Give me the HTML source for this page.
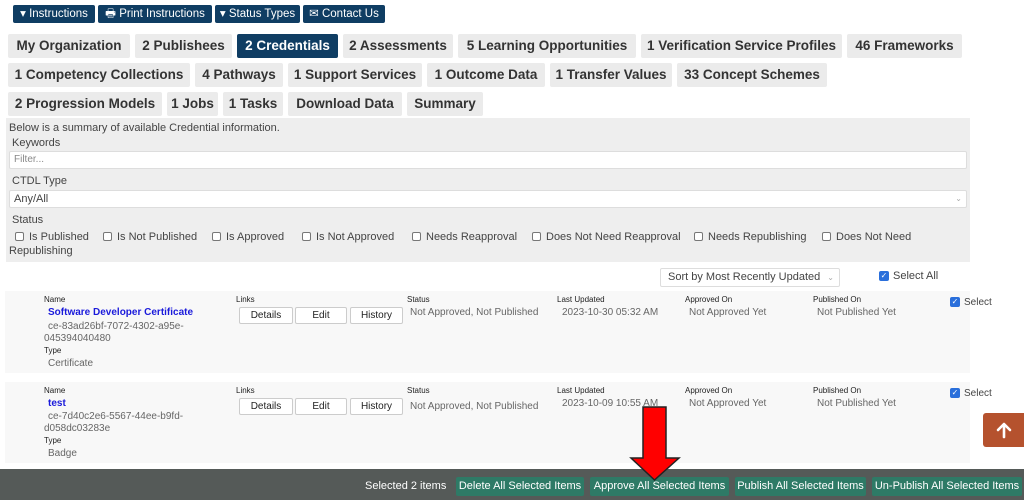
<!DOCTYPE html>
<html><head><meta charset="utf-8"><style>
*{box-sizing:border-box;margin:0;padding:0}
body{width:1024px;height:500px;overflow:hidden;background:#fff;font-family:"Liberation Sans",sans-serif;position:relative;color:#333}
.a{position:absolute;white-space:nowrap}
.tb{position:absolute;height:18px;background:#0f3d63;color:#fff;font-size:11.5px;line-height:18px;border-radius:2px;text-align:center}
.tab{position:absolute;height:24px;background:#ebebeb;color:#333;font-weight:bold;font-size:13.5px;line-height:24px;text-align:center;border-radius:2px}
.tab.on{background:#0f3d63;color:#fff}
.sm{font-size:11px;color:#444}
.lab{font-size:8px;color:#222}
.val{font-size:10px;color:#666}
.btn{position:absolute;height:17px;border:1px solid #ccc;background:#fff;border-radius:2px;font-size:10px;line-height:15px;text-align:center;color:#222}
.cb{display:inline-block;width:9px;height:9px;border:1px solid #777;border-radius:2px;vertical-align:-1px;margin-right:5px;background:#fff}
.cbc{position:absolute;width:10px;height:10px;background:#2a6fdb;border-radius:2px;color:#fff;font-size:8px;line-height:10px;text-align:center}
.gb{position:absolute;top:477px;height:19px;background:#2e7a66;color:#fff;font-size:11px;line-height:19px;text-align:center;border-radius:2px}
</style></head><body>
<div class="tb" style="left:13px;top:5px;width:82px">▾ Instructions</div>
<div class="tb" style="left:98px;top:5px;width:114px">🖶 Print Instructions</div>
<div class="tb" style="left:215px;top:5px;width:85px">▾ Status Types</div>
<div class="tb" style="left:303px;top:5px;width:82px">✉ Contact Us</div>

<div class="tab" style="left:8px;top:34px;width:122px">My Organization</div>
<div class="tab" style="left:135px;top:34px;width:97px">2 Publishees</div>
<div class="tab on" style="left:237px;top:34px;width:101px">2 Credentials</div>
<div class="tab" style="left:343px;top:34px;width:110px">2 Assessments</div>
<div class="tab" style="left:458px;top:34px;width:178px">5 Learning Opportunities</div>
<div class="tab" style="left:641px;top:34px;width:201px">1 Verification Service Profiles</div>
<div class="tab" style="left:847px;top:34px;width:115px">46 Frameworks</div>
<div class="tab" style="left:8px;top:63px;width:182px">1 Competency Collections</div>
<div class="tab" style="left:195px;top:63px;width:88px">4 Pathways</div>
<div class="tab" style="left:288px;top:63px;width:134px">1 Support Services</div>
<div class="tab" style="left:427px;top:63px;width:118px">1 Outcome Data</div>
<div class="tab" style="left:550px;top:63px;width:122px">1 Transfer Values</div>
<div class="tab" style="left:677px;top:63px;width:150px">33 Concept Schemes</div>
<div class="tab" style="left:8px;top:92px;width:154px">2 Progression Models</div>
<div class="tab" style="left:167px;top:92px;width:51px">1 Jobs</div>
<div class="tab" style="left:223px;top:92px;width:60px">1 Tasks</div>
<div class="tab" style="left:288px;top:92px;width:114px">Download Data</div>
<div class="tab" style="left:407px;top:92px;width:76px">Summary</div>

<div class="a" style="left:6px;top:118px;width:964px;height:144px;background:#eee"></div>
<div class="a sm" style="left:9px;top:122px">Below is a summary of available Credential information.</div>
<div class="a sm" style="left:12px;top:137px">Keywords</div>
<div class="a" style="left:9px;top:151px;width:958px;height:18px;background:#fff;border:1px solid #ddd;border-radius:2px;font-size:10px;color:#888;line-height:16px;padding-left:4px">Filter...</div>
<div class="a sm" style="left:12px;top:175px">CTDL Type</div>
<div class="a" style="left:9px;top:190px;width:958px;height:18px;background:#fff;border:1px solid #ddd;border-radius:2px;font-size:11px;color:#444;line-height:16px;padding-left:4px">Any/All<span style="position:absolute;right:4px;color:#aaa;font-size:8px">⌄</span></div>
<div class="a sm" style="left:12px;top:214px">Status</div>
<div class="a sm" style="left:15px;top:231px"><span class="cb"></span>Is Published</div>
<div class="a sm" style="left:103px;top:231px"><span class="cb"></span>Is Not Published</div>
<div class="a sm" style="left:212px;top:231px"><span class="cb"></span>Is Approved</div>
<div class="a sm" style="left:302px;top:231px"><span class="cb"></span>Is Not Approved</div>
<div class="a sm" style="left:412px;top:231px"><span class="cb"></span>Needs Reapproval</div>
<div class="a sm" style="left:532px;top:231px"><span class="cb"></span>Does Not Need Reapproval</div>
<div class="a sm" style="left:694px;top:231px"><span class="cb"></span>Needs Republishing</div>
<div class="a sm" style="left:822px;top:231px"><span class="cb"></span>Does Not Need</div>
<div class="a sm" style="left:9px;top:245px">Republishing</div>

<div class="a" style="left:660px;top:268px;width:180px;height:19px;border:1px solid #ddd;border-radius:2px;font-size:11px;line-height:17px;padding-left:7px;color:#444">Sort by Most Recently Updated<span style="position:absolute;right:5px;color:#aaa;font-size:8px">⌄</span></div>
<div class="cbc" style="left:879px;top:271px">✓</div>
<div class="a sm" style="left:893px;top:270px">Select All</div>

<div class="a" style="left:5px;top:291px;width:965px;height:82px;background:#f8f8f8"></div>
<div class="a" style="left:5px;top:382px;width:965px;height:81px;background:#f8f8f8"></div>

<div class="a lab" style="left:44px;top:295px">Name</div>
<div class="a" style="left:48px;top:307px;font-size:10px;font-weight:bold;color:#1a1adb">Software Developer Certificate</div>
<div class="a val" style="left:48px;top:321px">ce-83ad26bf-7072-4302-a95e-</div>
<div class="a val" style="left:44px;top:333px">045394040480</div>
<div class="a lab" style="left:44px;top:346px">Type</div>
<div class="a val" style="left:48px;top:358px">Certificate</div>
<div class="a lab" style="left:236px;top:295px">Links</div>
<div class="btn" style="left:239px;top:307px;width:54px">Details</div>
<div class="btn" style="left:295px;top:307px;width:52px">Edit</div>
<div class="btn" style="left:350px;top:307px;width:53px">History</div>
<div class="a lab" style="left:407px;top:295px">Status</div>
<div class="a val" style="left:410px;top:307px">Not Approved, Not Published</div>
<div class="a lab" style="left:557px;top:295px">Last Updated</div>
<div class="a val" style="left:562px;top:307px">2023-10-30 05:32 AM</div>
<div class="a lab" style="left:685px;top:295px">Approved On</div>
<div class="a val" style="left:689px;top:307px">Not Approved Yet</div>
<div class="a lab" style="left:813px;top:295px">Published On</div>
<div class="a val" style="left:817px;top:307px">Not Published Yet</div>
<div class="cbc" style="left:950px;top:297px">✓</div>
<div class="a val" style="left:964px;top:297px;color:#444">Select</div>

<div class="a lab" style="left:44px;top:386px">Name</div>
<div class="a" style="left:48px;top:398px;font-size:10px;font-weight:bold;color:#1a1adb">test</div>
<div class="a val" style="left:48px;top:411px">ce-7d40c2e6-5567-44ee-b9fd-</div>
<div class="a val" style="left:44px;top:423px">d058dc03283e</div>
<div class="a lab" style="left:44px;top:436px">Type</div>
<div class="a val" style="left:48px;top:448px">Badge</div>
<div class="a lab" style="left:236px;top:386px">Links</div>
<div class="btn" style="left:239px;top:398px;width:54px">Details</div>
<div class="btn" style="left:295px;top:398px;width:52px">Edit</div>
<div class="btn" style="left:350px;top:398px;width:53px">History</div>
<div class="a lab" style="left:407px;top:386px">Status</div>
<div class="a val" style="left:410px;top:401px">Not Approved, Not Published</div>
<div class="a lab" style="left:557px;top:386px">Last Updated</div>
<div class="a val" style="left:562px;top:398px">2023-10-09 10:55 AM</div>
<div class="a lab" style="left:685px;top:386px">Approved On</div>
<div class="a val" style="left:689px;top:398px">Not Approved Yet</div>
<div class="a lab" style="left:813px;top:386px">Published On</div>
<div class="a val" style="left:817px;top:398px">Not Published Yet</div>
<div class="cbc" style="left:950px;top:388px">✓</div>
<div class="a val" style="left:964px;top:388px;color:#444">Select</div>

<div class="a" style="left:983px;top:413px;width:41px;height:34px;background:#b5522e;border-radius:3px 0 0 3px"></div>
<svg class="a" style="left:995px;top:421px" width="18" height="18"><path d="M9 16V3M3 9l6-6 6 6" stroke="#fff" stroke-width="2.6" fill="none" stroke-linecap="round" stroke-linejoin="round"/></svg>

<div class="a" style="left:0;top:469px;width:1024px;height:31px;background:#555a58"></div>
<div class="a" style="left:365px;top:480px;font-size:11px;color:#fff">Selected 2 items</div>
<div class="gb" style="left:456px;width:128px">Delete All Selected Items</div>
<div class="gb" style="left:590px;width:139px">Approve All Selected Items</div>
<div class="gb" style="left:735px;width:131px">Publish All Selected Items</div>
<div class="gb" style="left:872px;width:150px">Un-Publish All Selected Items</div>

<svg class="a" style="left:628px;top:405px" width="54" height="78"><polygon points="15,2 38,2 38,53 51,53 26.5,75 3,53 15,53" fill="#f00" stroke="#222" stroke-width="1.5"/></svg>
</body></html>
